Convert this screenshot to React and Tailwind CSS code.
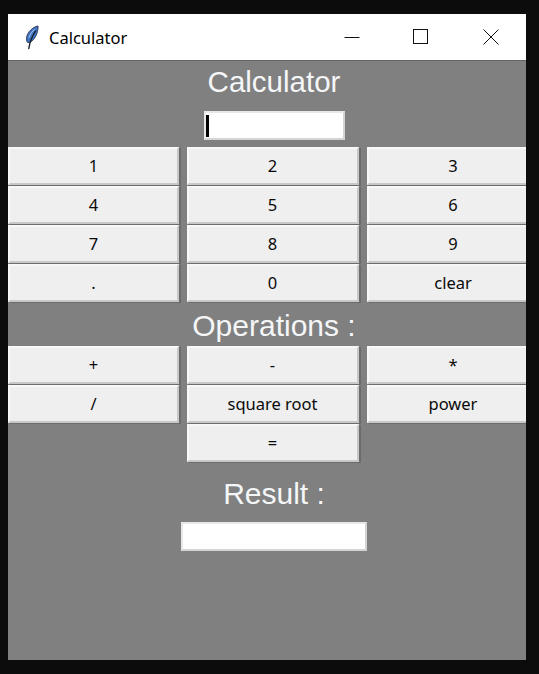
const Btn = ({ children, className = "" }) => (
  <button className={`h-[38px] w-full bg-[#efefef] border-t-2 border-l-2 border-b-2 border-r-2 border-t-[#f8f8f8] border-l-[#f8f8f8] border-b-[#c8c8c8] border-r-[#c8c8c8] shadow-[2px_1px_0_#6c6c6c] flex items-center justify-center text-[16.5px] leading-none text-[#0a0a0a] font-['Noto_Sans','Open_Sans',sans-serif] ${className}`}>
    {children}
  </button>
);

const Row = ({ items }) => (
  <div className="grid grid-cols-[171px_172px_173px] gap-x-[7.5px] h-[39px] [&>*:nth-child(3)]:ml-[0.5px]">
    {items.map((t, i) =>
      t === null ? <div key={i} /> : <Btn key={i}>{t}</Btn>
    )}
  </div>
);

const Feather = () => (
  <svg width="14" height="25" viewBox="0 0 14 25" fill="none">
    <path d="M13 1C8 2 3 6.500 1.800 11.500c-.6 2.500-.2 4.500.8 6C7 17.500 10.500 13 12 8c.7-2.400 1.200-4.800 1-7z" fill="#3f74c4" stroke="#2b3a55" strokeWidth="1" />
    <path d="M9.500 4.500C7 6.500 5 9.500 4 12.500" stroke="#a9c8ee" strokeWidth="1" strokeLinecap="round" />
    <path d="M10.500 6C8 10 5 15 3.800 23.500" stroke="#151c28" strokeWidth="1.400" strokeLinecap="round" />
  </svg>
);

const Heading = ({ children, className = "" }) => (
  <div className={`pl-[14px] text-center text-[#f4f6f8] font-['Liberation_Sans',Arial,sans-serif] leading-none ${className}`}>{children}</div>
);

export default function App() {
  return (
    <div className="w-[539px] h-[674px] bg-[#0c0c0c] pt-[14px] pl-2 overflow-hidden">
      <div className="w-[518px] h-[646px] flex flex-col bg-[#808080] overflow-hidden">
        <div className="h-[47px] shrink-0 bg-white border-b border-[#666] flex items-center pl-[17px]">
          <Feather />
          <span className="ml-[10px] mt-[2px] text-[16.5px] leading-none text-black font-['Noto_Sans','Open_Sans',sans-serif]">Calculator</span>
          <div className="ml-auto flex items-center h-full">
            <svg width="16" height="16" viewBox="0 0 16 16" className="mr-[53px]"><path d="M0.500 8.500H15.500" stroke="#111" strokeWidth="1" /></svg>
            <svg width="16" height="16" viewBox="0 0 16 16" className="mr-[54px]"><rect x="0.500" y="0.500" width="14" height="14" fill="none" stroke="#111" strokeWidth="1" /></svg>
            <svg width="16" height="16" viewBox="0 0 16 16" className="mr-[27px]"><path d="M0.500 0.500L15.500 15.500M15.500 0.500L0.500 15.500" stroke="#111" strokeWidth="1" /></svg>
          </div>
        </div>

        <Heading className="text-[29.5px] mt-[6px] h-[29px]">Calculator</Heading>
        <div className="mt-[15px] self-center ml-[14px] w-[141px] h-[29px] bg-white border-2 border-t-[#e8e8e8] border-l-[#e8e8e8] border-b-[#d4d4d4] border-r-[#d4d4d4] flex items-center">
          <div className="w-[3px] h-[22px] bg-black" />
        </div>

        <div className="mt-[7px] flex flex-col">
          <Row items={["1", "2", "3"]} />
          <Row items={["4", "5", "6"]} />
          <Row items={["7", "8", "9"]} />
          <Row items={[".", "0", "clear"]} />
        </div>

        <Heading className="text-[30px] mt-[8px] h-[35px]">Operations :</Heading>

        <div className="flex flex-col">
          <Row items={["+", "-", "*"]} />
          <Row items={["/", "square root", "power"]} />
          <Row items={[null, "=", null]} />
        </div>

        <Heading className="text-[30px] mt-[16px] h-[29px]">Result :</Heading>
        <div className="mt-[14px] self-center ml-[14px] w-[186px] h-[29px] bg-white border-2 border-t-[#e8e8e8] border-l-[#e8e8e8] border-b-[#d4d4d4] border-r-[#d4d4d4]" />
      </div>
    </div>
  );
}
